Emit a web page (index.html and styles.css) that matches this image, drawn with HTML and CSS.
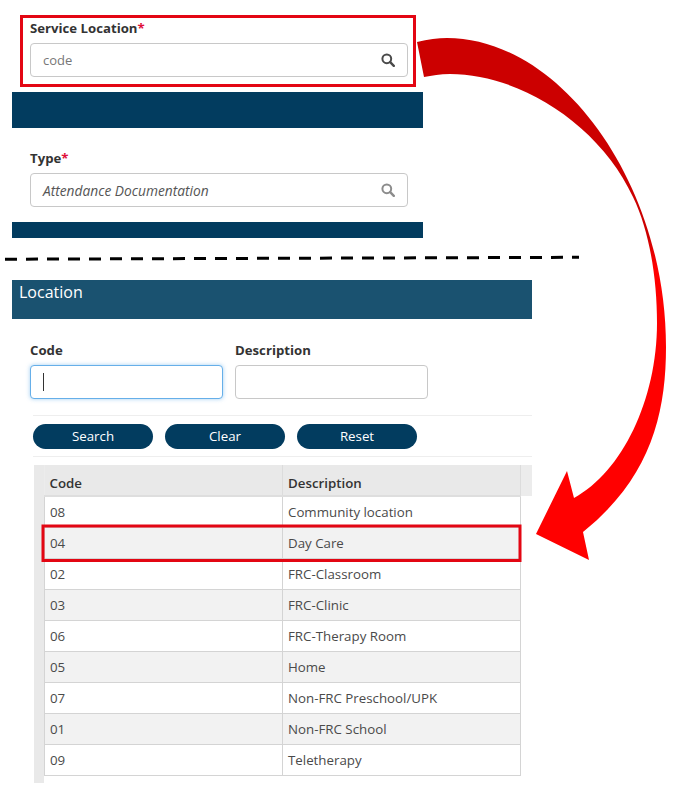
FILE: index.html
```html
<!DOCTYPE html>
<html lang="en">
<head>
<meta charset="utf-8">
<title>Service Location</title>
<link rel="stylesheet" href="styles.css">
</head>
<body>
<main class="page">
  <section class="field field-first">
    <label class="label">Service Location<span class="req">*</span></label>
    <div class="input lookup">
      <span class="placeholder">code</span>
      <svg class="icon" viewBox="0 0 14 14"><circle cx="5.8" cy="5.8" r="4.4" fill="none" stroke="#4a4a4a" stroke-width="2"/><path d="M9.200 9.200l3.600 3.600" stroke="#4a4a4a" stroke-width="2.400" stroke-linecap="round"/></svg>
    </div>
  </section>
  <div class="bar bar-tall"></div>
  <section class="field field-second">
    <label class="label">Type<span class="req">*</span></label>
    <div class="input lookup">
      <span class="value">Attendance Documentation</span>
      <svg class="icon" viewBox="0 0 14 14"><circle cx="5.8" cy="5.8" r="4.4" fill="none" stroke="#8c8c8c" stroke-width="2"/><path d="M9.200 9.200l3.600 3.600" stroke="#8c8c8c" stroke-width="2.400" stroke-linecap="round"/></svg>
    </div>
  </section>
  <div class="bar bar-short"></div>

  <header class="panel-head">Location</header>
  <form class="filters">
    <div class="filter">
      <label class="label">Code</label>
      <div class="input focused"><span class="caret"></span></div>
    </div>
    <div class="filter">
      <label class="label">Description</label>
      <div class="input"></div>
    </div>
  </form>
  <div class="actions">
    <span class="btn">Search</span>
    <span class="btn">Clear</span>
    <span class="btn">Reset</span>
  </div>
  <div class="table-wrap">
    <div class="table-frame">
      <table class="grid">
        <thead>
          <tr><th>Code</th><th>Description</th></tr>
        </thead>
        <tbody>
          <tr><td>08</td><td>Community location</td></tr>
          <tr><td>04</td><td>Day Care</td></tr>
          <tr><td>02</td><td>FRC-Classroom</td></tr>
          <tr><td>03</td><td>FRC-Clinic</td></tr>
          <tr><td>06</td><td>FRC-Therapy Room</td></tr>
          <tr><td>05</td><td>Home</td></tr>
          <tr><td>07</td><td>Non-FRC Preschool/UPK</td></tr>
          <tr><td>01</td><td>Non-FRC School</td></tr>
          <tr><td>09</td><td>Teletherapy</td></tr>
        </tbody>
      </table>
    </div>
  </div>
</main>
<svg class="overlay" viewBox="0 0 686 795" aria-hidden="true">
  <defs>
    <linearGradient id="arrowFill" gradientUnits="userSpaceOnUse" x1="0" y1="38" x2="0" y2="560">
      <stop offset="0" stop-color="#cc0000"/>
      <stop offset="0.38" stop-color="#cc0000"/>
      <stop offset="0.44" stop-color="#ff0000"/>
      <stop offset="1" stop-color="#ff0000"/>
    </linearGradient>
  </defs>
  <rect class="mark" x="21.500" y="16.500" width="393" height="69"/>
  <rect class="mark" x="43" y="526" width="477" height="34.500"/>
  <path class="dash" d="M5 259.200L579 257.300"/>
  <path fill="url(#arrowFill)" d="M417 42C428 39.500 438 38 447 38C560 38 666 182 666 347C666 415 650 478 583 532L589 560L536 534L567 471L574 498C622 472 657 400 657 323C657 280 650 232 633 197C600 125 520 74 450 74C440 74 432 75.500 424 77Z"/>
</svg>
</body>
</html>
```
FILE: styles.css
```css
* { box-sizing: border-box; }
html, body { margin: 0; padding: 0; background: #fff; }
body {
  position: relative;
  width: 686px;
  height: 795px;
  overflow: hidden;
  font-family: "Open Sans", "Noto Sans", sans-serif;
  font-size: 13.3px;
  color: #4a4a4a;
}
.page { display: flex; flex-direction: column; }

.field { margin-left: 30px; width: 378px; display: flex; flex-direction: column; }
.field-first { margin-top: 20px; }
.field-second { margin-top: 22px; }
.label { display: block; height: 23px; line-height: 17px; font-size: 13.2px; font-weight: 700; color: #333; }
.req { color: #e0103a; }

.input {
  height: 34px;
  background: #fff;
  border: 1px solid #c8c8c8;
  border-radius: 4px;
}
.lookup {
  display: flex;
  align-items: center;
  justify-content: space-between;
  padding: 0 12px;
}
.placeholder { color: #777; font-size: 13px; }
.value { color: #555; font-style: italic; font-size: 13.75px; }
.icon { width: 14px; height: 14px; flex: none; }

.bar { margin-left: 12px; width: 411px; background: #023c5f; }
.bar-tall { height: 36px; margin-top: 15px; }
.bar-short { height: 16px; margin-top: 15px; }

.panel-head {
  margin: 42px 0 0 12px;
  width: 520px;
  height: 39px;
  padding: 1px 7px;
  background: #1a5270;
  color: #fff;
  font-size: 16px;
  line-height: 22px;
}

.filters { display: flex; gap: 12px; margin: 23px 0 0 30px; }
.filter { width: 193px; }
.focused {
  display: flex;
  align-items: center;
  padding-left: 12px;
  border-color: #66afe9;
  box-shadow: 0 0 4px rgba(102, 175, 233, .6);
}
.caret { width: 1px; height: 18px; background: #333; }

.actions {
  margin: 16px 0 0 33px;
  width: 499px;
  height: 42px;
  padding-top: 8px;
  display: flex;
  gap: 12px;
  border-top: 1px solid #eee;
  border-bottom: 1px solid #eee;
}
.btn {
  width: 120px;
  height: 25px;
  border-radius: 13px;
  background: #023c5f;
  color: #fff;
  text-align: center;
  line-height: 24px;
}

.table-wrap {
  margin: 8px 0 0 34px;
  width: 498px;
  height: 318px;
  padding-left: 10px;
  background: linear-gradient(#e9e9e9, #e9e9e9) left top / 10px 100% no-repeat;
}
.table-frame {
  background: linear-gradient(#ececec, #ececec) left top / 100% 31px no-repeat;
}
.grid {
  width: 477px;
  border-collapse: collapse;
  table-layout: fixed;
}
.grid th, .grid td {
  padding: 0 5px;
  text-align: left;
  border-right: 1px solid #d4d4d4;
  border-bottom: 1px solid #d4d4d4;
}
.grid th:first-child, .grid td:first-child { width: 238px; }
.grid td:first-child { border-left: 1px solid #d4d4d4; padding-left: 5px; }
.grid th { height: 31px; padding-top: 6px; font-weight: 600; color: #333; background: #e9e9e9; border-bottom: 2px solid #dedede; border-right-color: #dcdcdc; }
.grid td { height: 31px; }
.grid tbody tr:nth-child(even) td { background: #f2f2f2; }

.overlay {
  position: absolute;
  left: 0;
  top: 0;
  width: 686px;
  height: 795px;
  pointer-events: none;
}
.mark { fill: none; stroke: #e30613; stroke-width: 3; }
.dash { fill: none; stroke: #000; stroke-width: 3; stroke-dasharray: 12 9; }
```
